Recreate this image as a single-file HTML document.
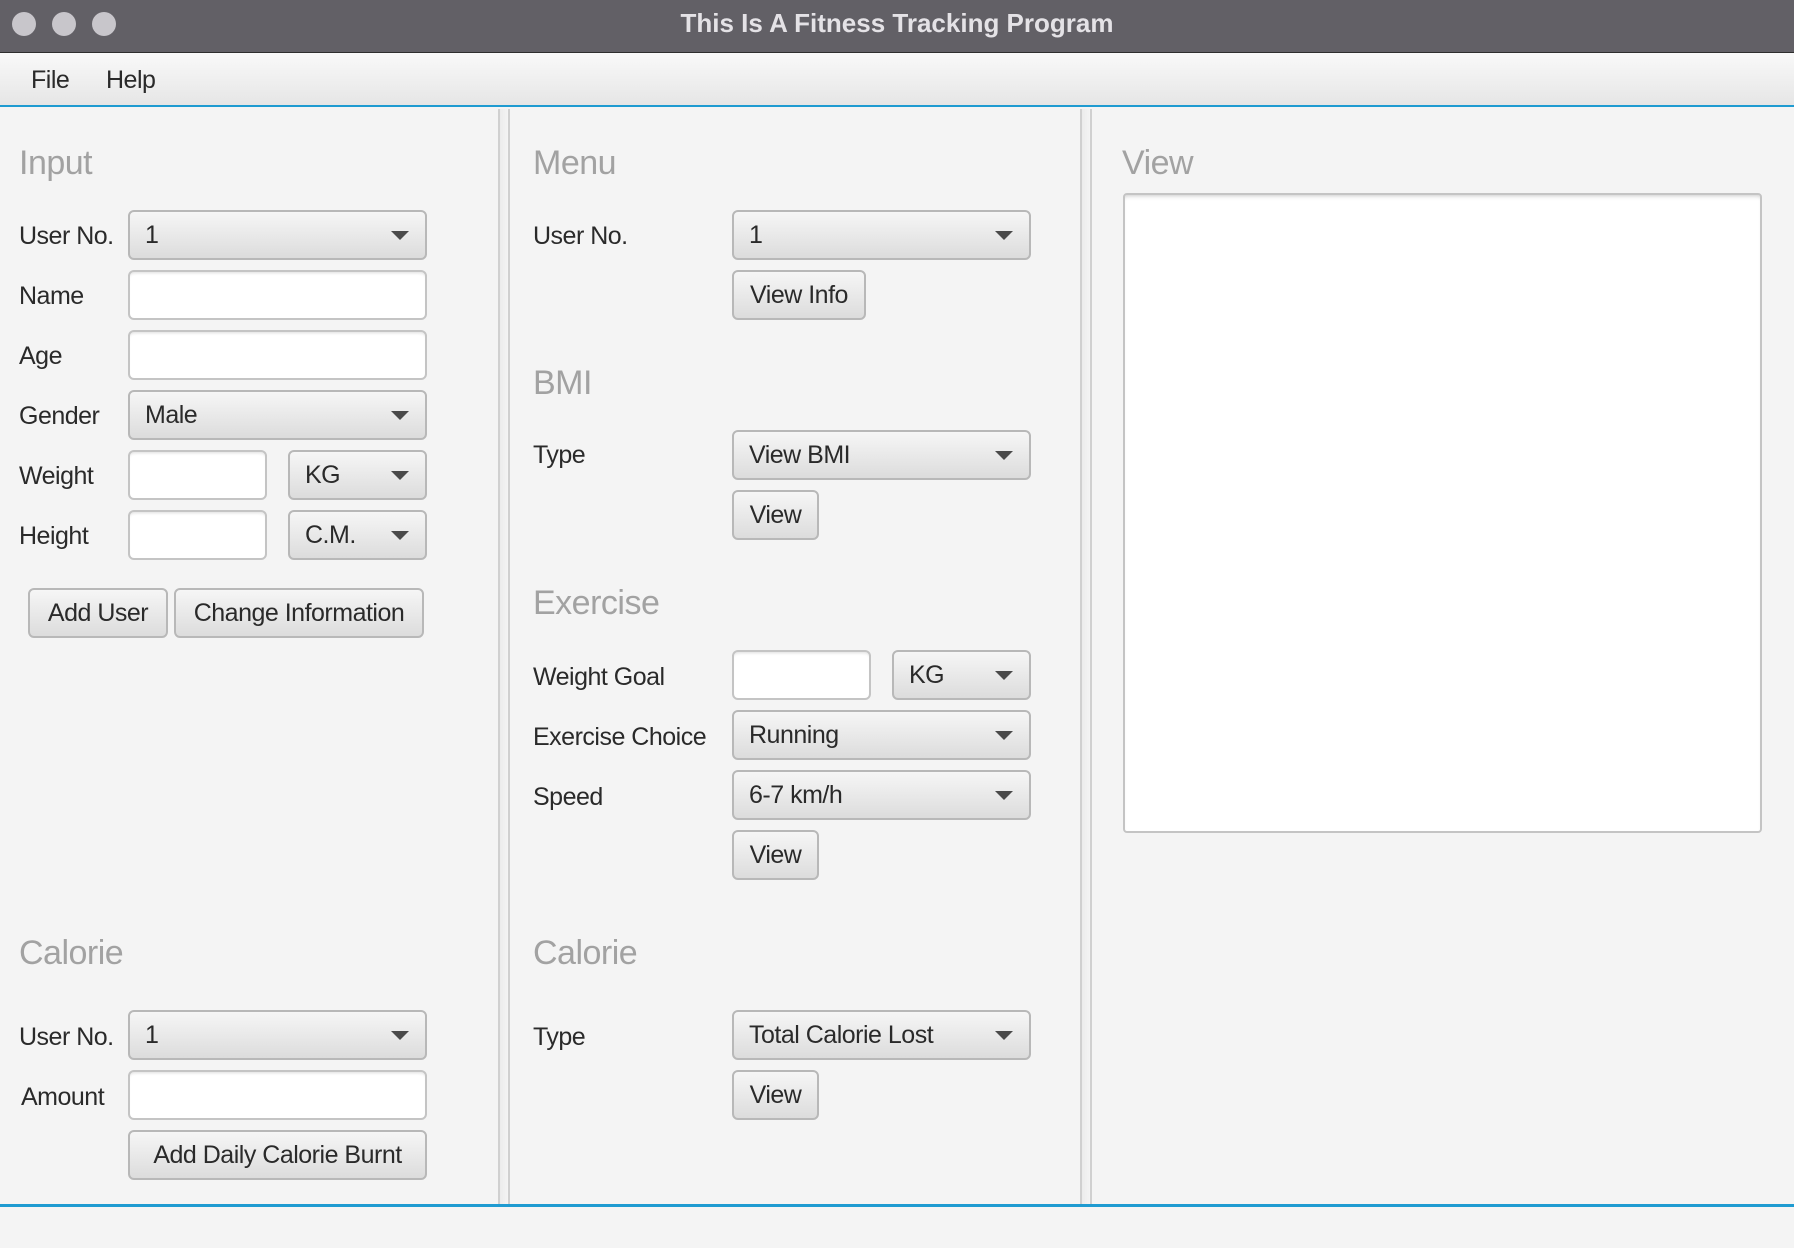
<!DOCTYPE html>
<html><head><meta charset="utf-8"><style>
*{box-sizing:border-box;margin:0;padding:0}
body{width:1794px;height:1248px;background:#f4f4f4;font-family:"Liberation Sans",sans-serif;position:relative;overflow:hidden;color:#2a2a2a}
.a{position:absolute}
.title{left:0;top:0;width:1794px;height:53px;background:#626066;border-bottom:1px solid #2e2e2e}
.dot{width:24px;height:24px;border-radius:50%;background:#c8c6cb;top:12px}
.menubar{left:0;top:53px;width:1794px;height:54px;background:linear-gradient(#f9f9f9,#e6e6e6);border-bottom:2px solid #1f9bd1}
.lbl{font-size:25px;color:#2a2a2a;letter-spacing:-0.5px}
.h{font-size:34px;color:#a2a2a2;letter-spacing:-0.5px}
.cb{height:50px;border:2px solid #b8b8b8;border-radius:6px;background:linear-gradient(#f6f6f6,#dcdcdc);font-size:25px;padding-left:15px;line-height:47px;letter-spacing:-0.5px}
.cb:after{content:"";position:absolute;right:16px;top:19px;border-left:9px solid transparent;border-right:9px solid transparent;border-top:9px solid #4a4a4a}
.tf{height:50px;border:2px solid #c4c4c4;border-radius:6px;background:#fff;box-shadow:inset 0 3px 3px -2px #ddd}
.bt{height:50px;border:2px solid #b8b8b8;border-radius:6px;background:linear-gradient(#f6f6f6,#dcdcdc);font-size:25px;text-align:center;line-height:47px;letter-spacing:-0.5px}
.div{top:109px;width:12px;height:1096px;border-left:2px solid #d0d0d0;border-right:2px solid #d0d0d0;background:linear-gradient(90deg,#ececec,#f4f4f4)}
</style></head><body>
<div class="a title"></div>
<div class="a dot" style="left:12px"></div>
<div class="a dot" style="left:52px"></div>
<div class="a dot" style="left:92px"></div>
<div class="a" style="left:0;top:8px;width:1794px;text-align:center;font-size:26px;font-weight:bold;color:#e4e2e6">This Is A Fitness Tracking Program</div>
<div class="a menubar"></div>
<div class="a lbl" style="left:31px;top:66px">File</div>
<div class="a lbl" style="left:106px;top:66px">Help</div>

<div class="a div" style="left:498px"></div>
<div class="a div" style="left:1080px"></div>

<!-- Left -->
<div class="a h" style="left:19px;top:144px">Input</div>
<div class="a lbl" style="left:19px;top:222px">User No.</div>
<div class="a cb" style="left:128px;top:210px;width:299px">1</div>
<div class="a lbl" style="left:19px;top:282px">Name</div>
<div class="a tf" style="left:128px;top:270px;width:299px"></div>
<div class="a lbl" style="left:19px;top:342px">Age</div>
<div class="a tf" style="left:128px;top:330px;width:299px"></div>
<div class="a lbl" style="left:19px;top:402px">Gender</div>
<div class="a cb" style="left:128px;top:390px;width:299px">Male</div>
<div class="a lbl" style="left:19px;top:462px">Weight</div>
<div class="a tf" style="left:128px;top:450px;width:139px"></div>
<div class="a cb" style="left:288px;top:450px;width:139px">KG</div>
<div class="a lbl" style="left:19px;top:522px">Height</div>
<div class="a tf" style="left:128px;top:510px;width:139px"></div>
<div class="a cb" style="left:288px;top:510px;width:139px">C.M.</div>
<div class="a bt" style="left:28px;top:588px;width:140px">Add User</div>
<div class="a bt" style="left:174px;top:588px;width:250px">Change Information</div>

<div class="a h" style="left:19px;top:934px">Calorie</div>
<div class="a lbl" style="left:19px;top:1023px">User No.</div>
<div class="a cb" style="left:128px;top:1010px;width:299px">1</div>
<div class="a lbl" style="left:21px;top:1083px">Amount</div>
<div class="a tf" style="left:128px;top:1070px;width:299px"></div>
<div class="a bt" style="left:128px;top:1130px;width:299px">Add Daily Calorie Burnt</div>

<!-- Middle -->
<div class="a h" style="left:533px;top:144px">Menu</div>
<div class="a lbl" style="left:533px;top:222px">User No.</div>
<div class="a cb" style="left:732px;top:210px;width:299px">1</div>
<div class="a bt" style="left:732px;top:270px;width:134px">View Info</div>
<div class="a h" style="left:533px;top:364px">BMI</div>
<div class="a lbl" style="left:533px;top:441px">Type</div>
<div class="a cb" style="left:732px;top:430px;width:299px">View BMI</div>
<div class="a bt" style="left:732px;top:490px;width:87px">View</div>
<div class="a h" style="left:533px;top:584px">Exercise</div>
<div class="a lbl" style="left:533px;top:663px">Weight Goal</div>
<div class="a tf" style="left:732px;top:650px;width:139px"></div>
<div class="a cb" style="left:892px;top:650px;width:139px">KG</div>
<div class="a lbl" style="left:533px;top:723px">Exercise Choice</div>
<div class="a cb" style="left:732px;top:710px;width:299px">Running</div>
<div class="a lbl" style="left:533px;top:783px">Speed</div>
<div class="a cb" style="left:732px;top:770px;width:299px">6-7 km/h</div>
<div class="a bt" style="left:732px;top:830px;width:87px">View</div>
<div class="a h" style="left:533px;top:934px">Calorie</div>
<div class="a lbl" style="left:533px;top:1023px">Type</div>
<div class="a cb" style="left:732px;top:1010px;width:299px">Total Calorie Lost</div>
<div class="a bt" style="left:732px;top:1070px;width:87px">View</div>

<!-- Right -->
<div class="a h" style="left:1122px;top:144px">View</div>
<div class="a" style="left:1123px;top:193px;width:639px;height:640px;background:#fff;border:2px solid #c4c4c4;border-radius:4px;box-shadow:inset 0 4px 4px -3px #ccc"></div>

<div class="a" style="left:0;top:1204px;width:1794px;height:3px;background:#1f9bd1"></div>
</body></html>
